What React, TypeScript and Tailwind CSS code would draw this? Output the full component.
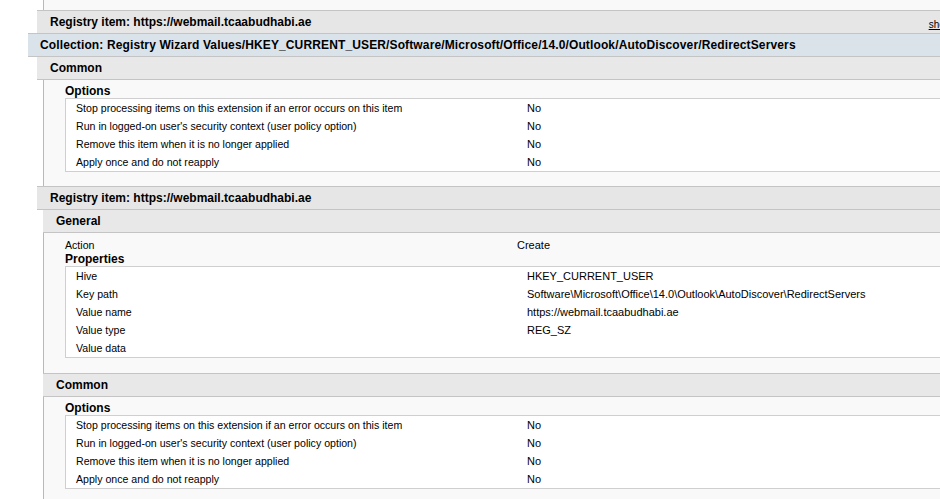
const font = "font-['Liberation_Sans',Arial,sans-serif]";

const optionRows = [
  "Stop processing items on this extension if an error occurs on this item",
  "Run in logged-on user's security context (user policy option)",
  "Remove this item when it is no longer applied",
  "Apply once and do not reapply",
];

const propRows: [string, string][] = [
  ["Hive", "HKEY_CURRENT_USER"],
  ["Key path", "Software\\Microsoft\\Office\\14.0\\Outlook\\AutoDiscover\\RedirectServers"],
  ["Value name", "https://webmail.tcaabudhabi.ae"],
  ["Value type", "REG_SZ"],
  ["Value data", ""],
];

function Header({ title, className, extra }: { title: string; className: string; extra?: React.ReactNode }) {
  return (
    <div
      className={`flex h-[24px] items-center border-y border-[#c4c4c4] text-[12px] font-bold text-black ${className}`}
    >
      <span>{title}</span>
      {extra}
    </div>
  );
}

function Table({ rows }: { rows: [string, string][] }) {
  return (
    <div className="ml-[21px] border border-[#cfcfcf] bg-white">
      {rows.map(([k, v]) => (
        <div key={k} className="flex h-[18px] items-baseline text-black">
          <span className="w-[461px] shrink-0 pl-[10px] text-[10.6px] leading-[18px]">{k}</span>
          <span className="text-[11px] leading-[18px]">{v}</span>
        </div>
      ))}
    </div>
  );
}

function Common({ options, className, pb }: { options: [string, string][]; className: string; pb: string }) {
  return (
    <>
      <Header title="Common" className={`bg-[#e8e8e8] ${className}`} />
      <div className={`pt-[4px] ${pb}`}>
        <div className="ml-[21px] h-[14px] text-[12px] font-bold leading-[14px]">Options</div>
        <Table rows={options} />
      </div>
    </>
  );
}

export default function App() {
  const opts = optionRows.map((r) => [r, "No"] as [string, string]);
  return (
    <div className={`h-[499px] w-[940px] overflow-hidden bg-white ${font}`}>
      <div className="ml-[43px] w-[917px] min-h-[499px] border-l border-[#b9b9b9] bg-[#f9f9f9]">
        <div className="h-[10px]" />
        <Header
          title="Registry item: https://webmail.tcaabudhabi.ae"
          className="-ml-[7px] bg-[#e6e6e6] pl-[13px]"
          extra={<span className="ml-auto mr-[8px] mt-[4px] text-[10px] font-normal underline">show</span>}
        />
        <Header
          title="Collection: Registry Wizard Values/HKEY_CURRENT_USER/Software/Microsoft/Office/14.0/Outlook/AutoDiscover/RedirectServers"
          className="-mt-px -ml-[16px] bg-[#dae3ea] pl-[12px] tracking-[0.13px]"
        />
        <Common options={opts} className="-mt-px -ml-[7px] pl-[13px]" pb="pb-[14px]" />

        <Header
          title="Registry item: https://webmail.tcaabudhabi.ae"
          className="-ml-[7px] bg-[#e6e6e6] pl-[13px]"
        />
        <Header title="General" className="-mt-px -ml-px bg-[#e8e8e8] pl-[13px]" />
        <div className="pt-[5px] pb-[15px]">
          <div className="ml-[21px] flex h-[14px] items-baseline leading-[14px]">
            <span className="w-[452px] shrink-0 text-[10.6px]">Action</span>
            <span className="text-[11px]">Create</span>
          </div>
          <div className="ml-[21px] h-[14px] text-[12px] font-bold leading-[14px]">Properties</div>
          <Table rows={propRows} />
        </div>
        <Common options={opts} className="-ml-px pl-[13px]" pb="pb-[15px]" />
      </div>
    </div>
  );
}
